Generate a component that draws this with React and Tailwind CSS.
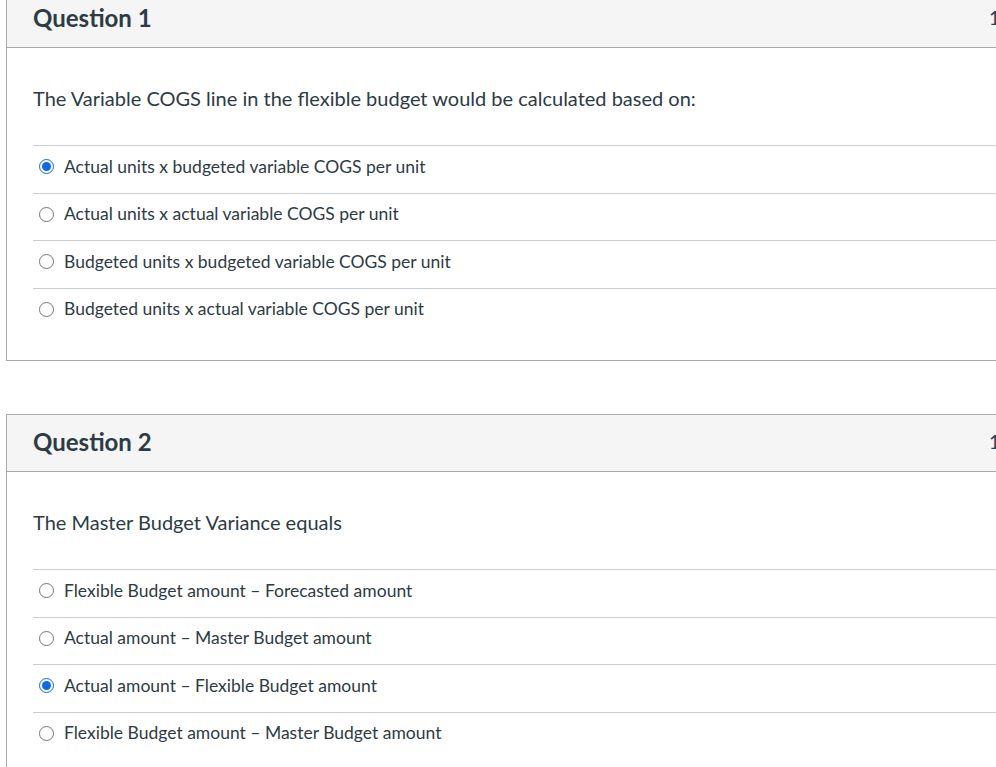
import React from "react";

const questions = [
  {
    id: 1,
    title: "Question 1",
    points: "1 pts",
    text: "The Variable COGS line in the flexible budget would be calculated based on:",
    answers: [
      "Actual units x budgeted variable COGS per unit",
      "Actual units x actual variable COGS per unit",
      "Budgeted units x budgeted variable COGS per unit",
      "Budgeted units x actual variable COGS per unit",
    ],
    picked: 0,
  },
  {
    id: 2,
    title: "Question 2",
    points: "1 pts",
    text: "The Master Budget Variance equals",
    answers: [
      "Flexible Budget amount \u2013 Forecasted amount",
      "Actual amount \u2013 Master Budget amount",
      "Actual amount \u2013 Flexible Budget amount",
      "Flexible Budget amount \u2013 Master Budget amount",
    ],
    picked: 2,
  },
];

function QuestionCard({ q }) {
  return (
    <div className="w-[1060px] border border-[#aaaaaa] bg-white">
      {/* header */}
      <div className="flex items-center h-[57px] bg-[#f5f5f5] border-b border-[#aaaaaa] pl-[26px] pb-[3px]">
        <div className="w-[956px] text-[24px] font-bold text-[#2d3b45] leading-none">
          {q.title}
        </div>
        <div className="text-[19px] text-[#2d3b45] leading-none">{q.points}</div>
      </div>

      {/* body */}
      <div className="pl-[26px] pt-[36px] pb-[25px]">
        <p className="text-[20px] leading-[28px] text-[#2d3b45]">{q.text}</p>
        <div className="mt-[33px]">
          {q.answers.map((a, i) => (
            <label
              key={i}
              className="flex items-center h-[47.5px] border-t border-[#c7cdd1] text-[17.5px] text-[#2d3b45] pb-[5px]"
            >
              <input
                type="radio"
                name={`q${q.id}`}
                defaultChecked={i === q.picked}
                className="w-[15px] h-[15px] m-0 ml-[6px] mr-[10px] accent-[#0b6be8]"
              />
              <span>{a}</span>
            </label>
          ))}
        </div>
      </div>
    </div>
  );
}

export default function App() {
  return (
    <div
      className="w-[996px] h-[767px] overflow-hidden bg-white"
      style={{ fontFamily: "Lato, 'Noto Sans', sans-serif" }}
    >
      <div className="pl-[6px] mt-[-10px] flex flex-col gap-[53px]">
        {questions.map((q) => (
          <QuestionCard key={q.id} q={q} />
        ))}
      </div>
    </div>
  );
}
